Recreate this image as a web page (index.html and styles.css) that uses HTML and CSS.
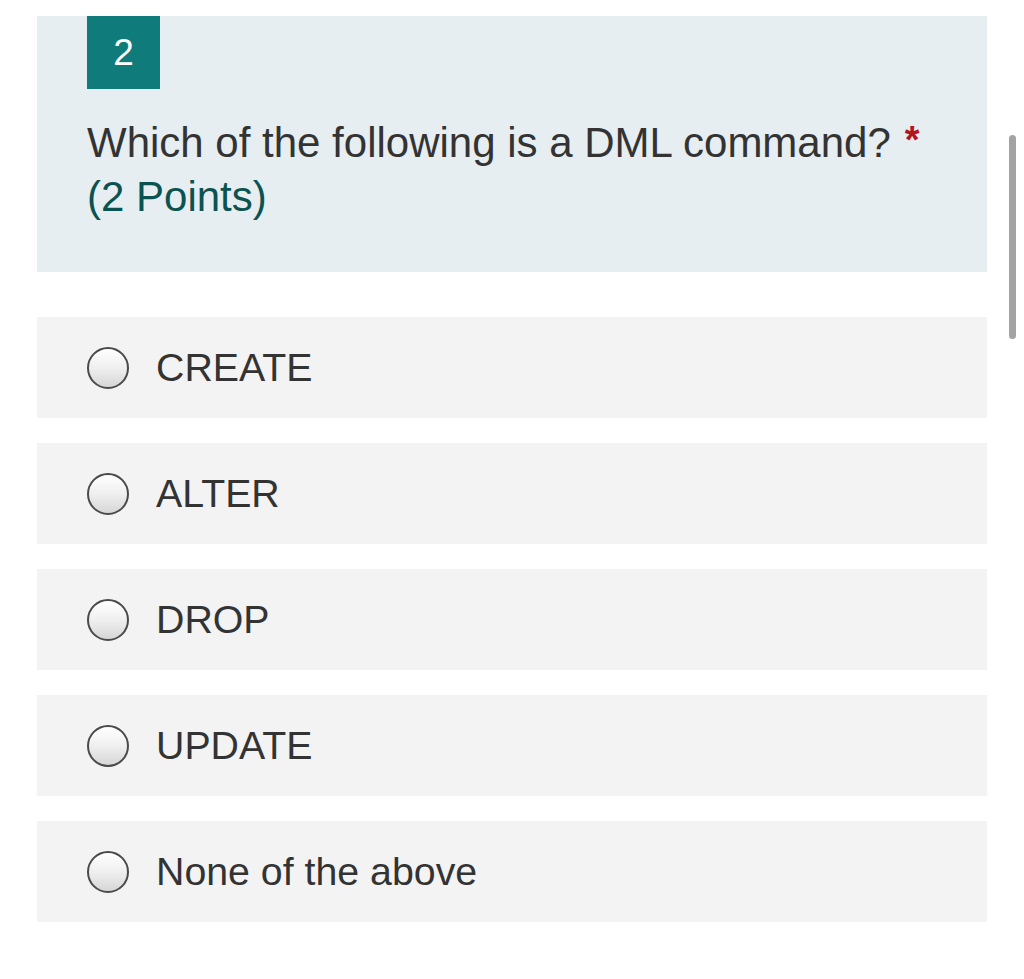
FILE: index.html
```html
<!DOCTYPE html>
<html>
<head>
<meta charset="utf-8">
<link rel="stylesheet" href="styles.css">
</head>
<body>
<div class="page">
  <section class="question">
    <div class="badge">2</div>
    <div class="qtext">
      <span class="title">Which of the following is a DML command?</span><span class="req">*</span><br>
      <span class="points">(2 Points)</span>
    </div>
  </section>
  <div class="options">
    <label class="option"><span class="radio"></span><span class="label">CREATE</span></label>
    <label class="option"><span class="radio"></span><span class="label">ALTER</span></label>
    <label class="option"><span class="radio"></span><span class="label">DROP</span></label>
    <label class="option"><span class="radio"></span><span class="label">UPDATE</span></label>
    <label class="option"><span class="radio"></span><span class="label">None of the above</span></label>
  </div>
</div>
<div class="scrollbar"></div>
</body>
</html>
```
FILE: styles.css
```css
html, body {
  margin: 0;
  padding: 0;
  background: #ffffff;
}
body {
  font-family: "Liberation Sans", Arial, sans-serif;
  color: #333333;
  width: 1024px;
  height: 979px;
  overflow: hidden;
  position: relative;
}
.page {
  padding: 16px 37px 0 37px;
}
.question {
  background: #e6eef1;
  padding: 0 50px 48px 50px;
}
.badge {
  width: 73px;
  height: 73px;
  background: #107b7b;
  color: #ffffff;
  font-size: 37px;
  display: flex;
  align-items: center;
  justify-content: center;
}
.qtext {
  margin-top: 27px;
  font-size: 42px;
  line-height: 54px;
}
.title {
  color: #333333;
}
.req {
  color: #b3151b;
  font-size: 38px;
  font-weight: bold;
  margin-left: 14px;
  vertical-align: top;
  position: relative;
  top: -3px;
}
.points {
  color: #0b5351;
}
.options {
  display: flex;
  flex-direction: column;
  gap: 25px;
  margin-top: 45px;
}
.option {
  background: #f3f3f3;
  height: 101px;
  display: flex;
  align-items: center;
  padding-left: 50px;
}
.radio {
  width: 38px;
  height: 38px;
  border: 2.5px solid #4a4a4a;
  border-radius: 50%;
  background: linear-gradient(to bottom, #ffffff 0%, #efefef 50%, #d6d6d6 100%);
  flex: none;
}
.label {
  margin-left: 27px;
  font-size: 39.3px;
  color: #333333;
}
.scrollbar {
  position: absolute;
  left: 1009px;
  top: 135px;
  width: 7px;
  height: 204px;
  border-radius: 4px;
  background: #a3a3a3;
}
```
